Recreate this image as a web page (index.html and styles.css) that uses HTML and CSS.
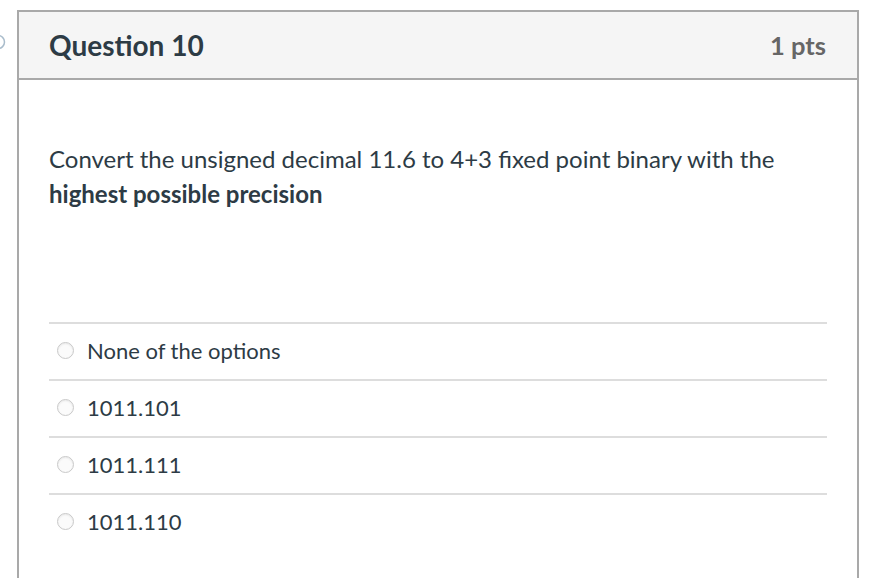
FILE: index.html
```html
<!DOCTYPE html>
<html lang="en">
<head>
<meta charset="utf-8">
<title>Question 10</title>
<link rel="stylesheet" href="styles.css">
</head>
<body>
<div class="page">
  <div class="gutter">
    <svg class="nav-icon" width="17" height="30" viewBox="0 0 17 30" aria-hidden="true">
      <circle cx="-2" cy="16" r="6.5" fill="none" stroke="#a9bccb" stroke-width="1.5"/>
    </svg>
  </div>
  <div class="question">
    <div class="q-header">
      <span class="q-name">Question 10</span>
      <span class="q-pts">1 pts</span>
    </div>
    <div class="q-body">
      <p class="q-text">Convert the unsigned decimal 11.6 to 4+3 fixed point binary with the <strong>highest possible precision</strong></p>
      <div class="answers">
        <label class="answer"><span class="radio"></span><span class="answer-text">None of the options</span></label>
        <label class="answer"><span class="radio"></span><span class="answer-text">1011.101</span></label>
        <label class="answer"><span class="radio"></span><span class="answer-text">1011.111</span></label>
        <label class="answer"><span class="radio"></span><span class="answer-text">1011.110</span></label>
      </div>
    </div>
  </div>
</div>
</body>
</html>
```

FILE: styles.css
```css
html, body {
  margin: 0;
  padding: 0;
  background: #ffffff;
  overflow: hidden;
}

body {
  font-family: Lato, "Open Sans", sans-serif;
  color: #2d3b45;
}

.page {
  display: flex;
  align-items: flex-start;
  padding-top: 10px;
}

.gutter {
  width: 17px;
  flex: none;
  padding-top: 16px;
}

.nav-icon {
  display: block;
}

.question {
  width: 842px;
  box-sizing: border-box;
  border: 2px solid #a9a9a9;
  border-bottom: none;
  min-height: 620px;
}

.q-header {
  height: 68px;
  box-sizing: border-box;
  background: #f5f5f5;
  border-bottom: 2px solid #a9a9a9;
  display: flex;
  align-items: center;
  justify-content: space-between;
  padding: 0 31px 0 30px;
}

.q-name {
  font-weight: 700;
  font-size: 28px;
  color: #2d3b45;
}

.q-pts {
  font-weight: 700;
  font-size: 25.5px;
  color: #666666;
}

.q-body {
  padding: 61px 30px 0 30px;
}

.q-text {
  margin: 0;
  font-size: 24px;
  line-height: 35px;
}

.q-text strong {
  font-weight: 700;
}

.answers {
  margin-top: 111px;
  display: flex;
  flex-direction: column;
}

.answer {
  display: flex;
  align-items: center;
  height: 57px;
  box-sizing: border-box;
  border-top: 2px solid #dddddd;
  padding-left: 8px;
  padding-bottom: 2px;
}

.radio {
  width: 17px;
  height: 17px;
  box-sizing: border-box;
  border-radius: 50%;
  border: 1px solid #c9c9c9;
  background: #fbfbfb;
  box-shadow: inset 0 1px 2px rgba(0, 0, 0, 0.08);
  flex: none;
}

.answer-text {
  margin-left: 13px;
  font-size: 22px;
}
```
